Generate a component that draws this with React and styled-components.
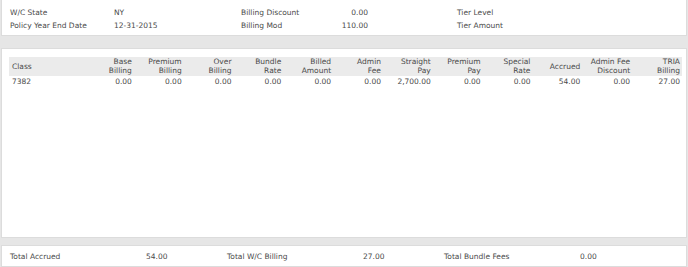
import React from "react";
import styled, { createGlobalStyle } from "styled-components";

const Global = createGlobalStyle`
  html, body { margin: 0; padding: 0; background: #e6e6e6; }
  body { font-family: "DejaVu Sans", Verdana, sans-serif; font-size: 7.5px; color: #4a4a4a; }
`;

const Page = styled.div`
  width: 688px;
  height: 267px;
  display: flex;
  flex-direction: column;
  box-sizing: border-box;
  padding: 0 1px 0 1px;
`;

const Panel = styled.section`
  background: #fff;
  border: 1px solid #dcdcdc;
  border-top: ${p => (p.$top ? "none" : "1px solid #dcdcdc")};
  box-sizing: border-box;
  width: 686px;
  height: ${p => p.$h}px;
  margin-top: ${p => p.$mt || 0}px;
`;

const InfoGrid = styled.div`
  display: grid;
  grid-template-columns: 104px 127px 80px 47px 1fr;
  grid-auto-rows: 13px;
  align-items: center;
  padding: 6px 0 0 8px;
`;

const Cell = styled.div`
  white-space: nowrap;
  text-align: ${p => p.$align || "left"};
  padding-left: ${p => p.$indent || 0}px;
`;

const TablePanel = styled(Panel)`
  padding: 8px 5px 0 7px;
`;

const Table = styled.table`
  width: 673px;
  border-collapse: collapse;
  table-layout: fixed;
`;

const Th = styled.th`
  background: #ebebeb;
  font-weight: normal;
  text-align: ${p => p.$align || "right"};
  padding: 0 ${p => (p.$align === "left" ? 0 : 2)}px 0 ${p => (p.$align === "left" ? 3 : 0)}px;
  height: 17px;
  line-height: 9.6px;
  vertical-align: middle;
`;

const Td = styled.td`
  text-align: ${p => p.$align || "right"};
  padding: 0 ${p => (p.$align === "left" ? 0 : 2)}px 0 ${p => (p.$align === "left" ? 3 : 0)}px;
  height: 12px;
  line-height: 12px;
`;

const FooterRow = styled.div`
  display: grid;
  grid-template-columns: repeat(3, 136px 81px);
  align-items: center;
  height: 100%;
  padding-left: 8px;
`;

const headers = [
  ["Base", "Billing"],
  ["Premium", "Billing"],
  ["Over", "Billing"],
  ["Bundle", "Rate"],
  ["Billed", "Amount"],
  ["Admin", "Fee"],
  ["Straight", "Pay"],
  ["Premium", "Pay"],
  ["Special", "Rate"],
  ["Accrued"],
  ["Admin Fee", "Discount"],
  ["TRIA", "Billing"],
];

const values = ["0.00", "0.00", "0.00", "0.00", "0.00", "0.00", "2,700.00", "0.00", "0.00", "54.00", "0.00", "27.00"];

export default function App() {
  return (
    <>
      <Global />
      <Page>
        <Panel $top $h={36}>
          <InfoGrid>
            <Cell>W/C State</Cell>
            <Cell>NY</Cell>
            <Cell>Billing Discount</Cell>
            <Cell $align="right">0.00</Cell>
            <Cell $indent={89}>Tier Level</Cell>
            <Cell>Policy Year End Date</Cell>
            <Cell>12-31-2015</Cell>
            <Cell>Billing Mod</Cell>
            <Cell $align="right">110.00</Cell>
            <Cell $indent={89}>Tier Amount</Cell>
          </InfoGrid>
        </Panel>
        <TablePanel $mt={12} $h={191}>
          <Table>
            <colgroup>
              <col style={{ width: 75 }} />
              {headers.map((_, i) => (
                <col key={i} />
              ))}
            </colgroup>
            <thead>
              <tr>
                <Th $align="left">Class</Th>
                {headers.map((h, i) => (
                  <Th key={i}>
                    {h.map((l, j) => (
                      <React.Fragment key={j}>
                        {j > 0 && <br />}
                        {l}
                      </React.Fragment>
                    ))}
                  </Th>
                ))}
              </tr>
            </thead>
            <tbody>
              <tr>
                <Td $align="left">7382</Td>
                {values.map((v, i) => (
                  <Td key={i}>{v}</Td>
                ))}
              </tr>
            </tbody>
          </Table>
        </TablePanel>
        <Panel $mt={7} $h={22}>
          <FooterRow>
            <Cell>Total Accrued</Cell>
            <Cell>54.00</Cell>
            <Cell>Total W/C Billing</Cell>
            <Cell>27.00</Cell>
            <Cell>Total Bundle Fees</Cell>
            <Cell>0.00</Cell>
          </FooterRow>
        </Panel>
      </Page>
    </>
  );
}
